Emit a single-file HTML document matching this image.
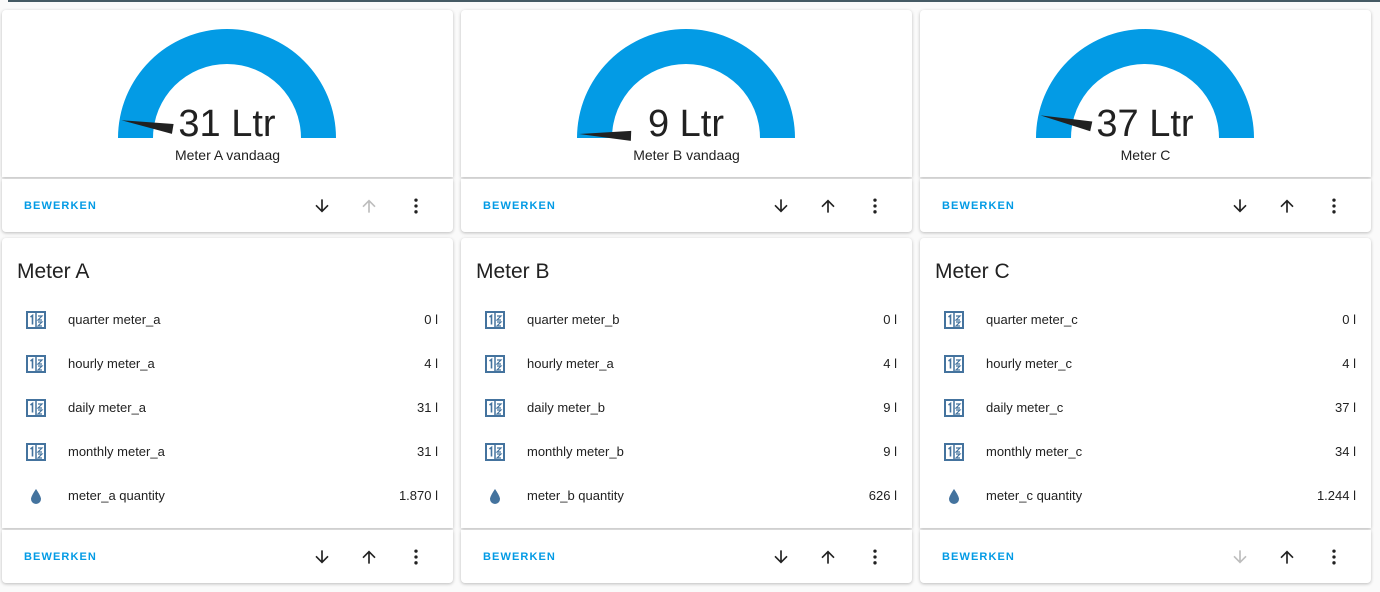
<!DOCTYPE html>
<html><head><style>
body{margin:0;width:1380px;height:592px;background:#fafafa;font-family:"Liberation Sans",sans-serif;position:relative;overflow:hidden;color:#212121}
.topbar{position:absolute;left:8px;top:0;width:1372px;height:2px;background:#455a64}
.card{position:absolute;background:#fff;border-radius:4px;box-shadow:0 1px 3px rgba(0,0,0,.25)}
.foot{position:absolute;background:#fff;border-radius:0 0 4px 4px;box-shadow:0 1px 3px rgba(0,0,0,.25)}
.bw{position:absolute;left:22px;top:50%;transform:translateY(-50%);color:#039be5;font-size:11px;letter-spacing:1.1px;font-weight:bold}
.ic{position:absolute;top:50%;transform:translateY(-50%)}
.title{position:absolute;left:15px;top:22px;font-size:21px}
.row{position:absolute;left:0;right:0;height:20px;font-size:13px}
.row .n{position:absolute;left:66px;top:2px}
.row .v{position:absolute;right:15px;top:2px}
.row svg{position:absolute;left:22px;top:0}
.gname{position:absolute;width:100%;text-align:center;top:137px;font-size:14px}
</style></head><body>
<div class="topbar"></div>
<script>
const cols=[2,461,920];
const g=[["31 Ltr","Meter A vandaag",0.053],["9 Ltr","Meter B vandaag",0.012],["37 Ltr","Meter C",0.068]];
const ent=[["quarter meter_a","hourly meter_a","daily meter_a","monthly meter_a","meter_a quantity"],["quarter meter_b","hourly meter_a","daily meter_b","monthly meter_b","meter_b quantity"],["quarter meter_c","hourly meter_c","daily meter_c","monthly meter_c","meter_c quantity"]];
const vals=[["0 l","4 l","31 l","31 l","1.870 l"],["0 l","4 l","9 l","9 l","626 l"],["0 l","4 l","37 l","34 l","1.244 l"]];
function foot(x,y,d){
 const dn=`<svg class="ic" style="left:310px" width="20" height="20" viewBox="0 0 24 24"><path d="M11 4h2v12l5.5-5.5 1.4 1.4L12 19.8 4.1 11.9l1.4-1.4L11 16z" fill="${d[0]?'#bdbdbd':'#212121'}"/></svg>`;
 const up=`<svg class="ic" style="left:357px" width="20" height="20" viewBox="0 0 24 24"><path d="M13 20h-2V8l-5.5 5.5-1.4-1.4L12 4.2l7.9 7.9-1.4 1.4L13 8z" fill="${d[1]?'#bdbdbd':'#212121'}"/></svg>`;
 const m=`<svg class="ic" style="left:404px" width="20" height="20" viewBox="0 0 24 24"><circle cx="12" cy="5" r="2" fill="#212121"/><circle cx="12" cy="12" r="2" fill="#212121"/><circle cx="12" cy="19" r="2" fill="#212121"/></svg>`;
 return `<div class="foot" style="left:${x}px;top:${y}px;width:451px;height:53px"><div class="bw">BEWERKEN</div>${dn}${up}${m}</div>`;
}
const cnt=`<svg width="24" height="20" viewBox="0 0 24 20"><rect x="3" y="2" width="18" height="16" fill="none" stroke="#44739e" stroke-width="2"/><line x1="12" y1="2" x2="12" y2="18" stroke="#44739e" stroke-width="1.5"/><path d="M6.5 7l2-1.5v9" stroke="#44739e" stroke-width="1.6" fill="none"/><path d="M14 6h4l-4 4h4M14 12h4l-4 4h4" stroke="#44739e" stroke-width="1.2" fill="none"/></svg>`;
const drop=`<svg width="24" height="20" viewBox="0 0 24 20"><path d="M12 3C12 3 7 10 7 13a5 5 0 0 0 10 0c0-3-5-10-5-10z" fill="#44739e"/></svg>`;
let h='';
cols.forEach((x,i)=>{
 const [val,name,f]=g[i];
 const cx=225,cy=128,R=109,r=74;
 const a=Math.PI*(1-f);
 const tx=cx+Math.cos(a)*(R-2), ty=cy-Math.sin(a)*(R-2);
 const px=-Math.sin(a),py=-Math.cos(a);
 const bx=cx+Math.cos(a)*55, by=cy-Math.sin(a)*55;
 h+=`<div class="card" style="left:${x}px;top:10px;width:451px;height:167px;border-radius:4px 4px 0 0">
 <svg width="451" height="140" style="position:absolute;left:0;top:0">
 <path d="M${cx-R} ${cy} A${R} ${R} 0 0 1 ${cx+R} ${cy} L${cx+r} ${cy} A${r} ${r} 0 0 0 ${cx-r} ${cy}Z" fill="#039be5"/>
 <polygon points="${tx},${ty} ${bx+px*5},${by+py*5} ${bx-px*5},${by-py*5}" fill="#212121"/>
 <text x="${cx}" y="${cy-2}" text-anchor="middle" font-family="Liberation Sans" font-size="38" fill="#212121">${val}</text></svg>
 <div class="gname">${name}</div></div>`;
 h+=foot(x,179,[false,i==0]);
 let rows='';
 ent[i].forEach((n,j)=>{rows+=`<div class="row" style="top:${72+j*44}px">${j<4?cnt:drop}<span class="n">${n}</span><span class="v">${vals[i][j]}</span></div>`});
 h+=`<div class="card" style="left:${x}px;top:238px;width:451px;height:290px;border-radius:4px 4px 0 0"><div class="title">Meter ${'ABC'[i]}</div>${rows}</div>`;
 h+=foot(x,530,i==2?[true,false]:[false,false]);
});
document.write(h);
</script>
</body></html>
